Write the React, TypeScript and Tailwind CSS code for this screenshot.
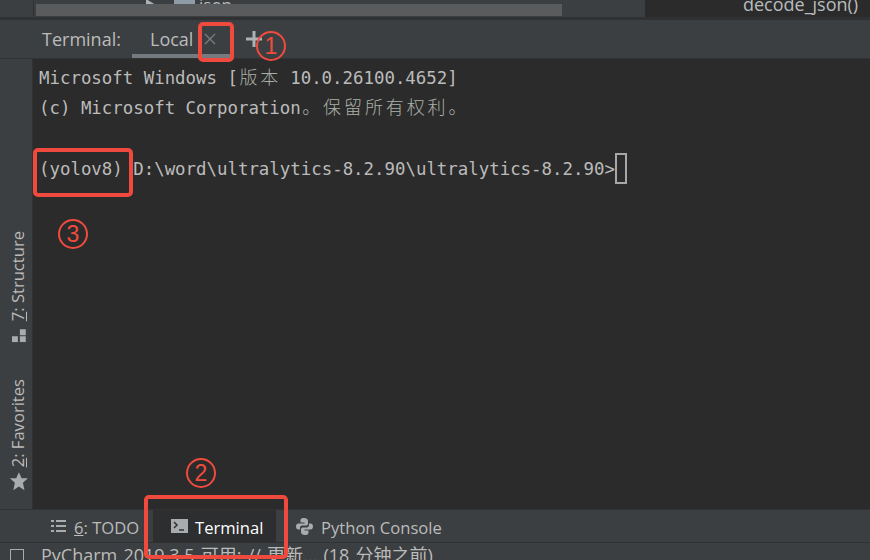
const mono = "font-['DejaVu_Sans_Mono','Noto_Sans_CJK_SC',monospace]";

function Circled({ n, cls }: { n: string; cls: string }) {
  return (
    <div className={`absolute flex items-center justify-center rounded-full border-2 border-[#f04b3e] text-[#f04b3e] font-['Liberation_Sans',sans-serif] text-[23px] w-[30px] h-[30px] ${cls}`}>
      {n}
    </div>
  );
}

function RedBox({ cls }: { cls: string }) {
  return <div className={`absolute border-4 border-[#f0493d] rounded-[5px] ${cls}`} />;
}

function Cjk({ text }: { text: string }) {
  return (
    <>
      {text.split("").map((c, i) => (
        <span key={i} className="inline-block w-[20.9px] text-center text-[18px] font-light text-[#aab0a8]">
          {c}
        </span>
      ))}
    </>
  );
}

export default function App() {
  return (
    <div className="relative w-[870px] h-[560px] overflow-hidden bg-[#3c3f41] flex flex-col font-['Open_Sans','Noto_Sans_CJK_SC',sans-serif] text-[#bbbbbb]">
      <div className="h-[17px] flex shrink-0 overflow-hidden">
        <div className="w-[33px] shrink-0" />
        <div className="w-[612px] shrink-0 relative border-l border-[#323232]">
          <div className="absolute left-[112px] -top-[8px] flex items-center gap-1 text-[17px]">
            <svg width="10" height="12" viewBox="0 0 10 12" className="mr-[14px]">
              <path d="M0 0L10 6L0 12Z" fill="#aeb1b3" />
            </svg>
            <div className="w-[21px] h-[14px] bg-[#8f9ba7] mt-[-8px]" />
            <span>json</span>
          </div>
          <div className="absolute left-[2px] top-[4px] w-[526px] h-[12px] bg-[#595b5d]" />
        </div>
        <div className="flex-1 bg-[#2b2b2b] pl-[98px] text-[18px] leading-[20px] -mt-[6px] h-[23px] text-[#b8bcbf]">decode_json()</div>
      </div>
      <div className="h-[3px] bg-[#2f3132] shrink-0" />
      <div className="h-[39px] shrink-0 flex pl-[42px] items-center border-b border-[#323232] text-[18px]">
        <span className="w-[90px]">Terminal:</span>
        <div className="relative flex items-center h-full w-[100px] pl-[18px]">
          <span>Local</span>
          <svg width="12" height="12" viewBox="0 0 12 12" className="ml-[11px]" stroke="#7b7e81" strokeWidth="1.3">
            <path d="M1 1L11 11M11 1L1 11" />
          </svg>
          <div className="absolute left-0 bottom-0 w-[98px] h-[4px] bg-[#747a80]" />
        </div>
        <svg width="16" height="16" viewBox="0 0 16 16" className="ml-[14px]" fill="#aeb1b3">
          <path d="M6.5 0h3v6.5H16v3H9.5V16h-3V9.5H0v-3h6.5z" />
        </svg>
      </div>
      <div className="flex flex-1 min-h-0">
        <div className="w-[33px] shrink-0 border-r border-[#323232] flex flex-col justify-end items-center pb-[19px] pl-[4px] text-[16.6px]">
          <div className="flex items-center [writing-mode:vertical-rl] rotate-180 gap-[7px] mb-[36px]">
            <svg width="14" height="14" viewBox="0 0 14 14" fill="#a9acae" className="rotate-180">
              <path d="M0 8h6v6H0zM8 8h6v6H8zM8 1h6v6H8z" />
            </svg>
            <span><span className="underline">7</span>: Structure</span>
          </div>
          <div className="flex items-center [writing-mode:vertical-rl] rotate-180 gap-[5px]">
            <svg width="18" height="18" viewBox="0 0 18 18" fill="#a9acae" className="rotate-180">
              <path d="M9 0l2.7 6H18l-5 4.3L14.6 18 9 14.2 3.4 18 5 10.3 0 6h6.3z" />
            </svg>
            <span><span className="underline">2</span>: Favorites</span>
          </div>
        </div>
        <div className={`flex-1 bg-[#2b2b2b] pl-[6px] pt-[4px] text-[17.4px] leading-[30px] text-[#bbbbbb] whitespace-pre ${mono}`}>
          <div className="h-[30px]">Microsoft Windows [<Cjk text="版本" /> 10.0.26100.4652]</div>
          <div className="h-[30px]">(c) Microsoft Corporation<Cjk text="。保留所有权利。" /></div>
          <div className="h-[30px]">&nbsp;</div>
          <div className="flex items-center">
            <span>(yolov8) D:\word\ultralytics-8.2.90\ultralytics-8.2.90&gt;</span>
            <span className="inline-block w-[12px] h-[31px] border-2 border-[#a5a7a9]" />
          </div>
        </div>
      </div>
      <div className="h-[33px] shrink-0 border-t border-[#323232] flex items-center pl-[51px] text-[16.6px]">
        <svg width="15" height="14" viewBox="0 0 15 14" fill="#a9acae">
          <path d="M0 1h3v2H0zM5 1h10v2H5zM0 6h3v2H0zM5 6h10v2H5zM0 11h3v2H0zM5 11h10v2H5z" />
        </svg>
        <span className="ml-[8px] w-[79px] mt-[4px]"><span className="underline">6</span>: TODO</span>
        <div className="w-[123px] h-full flex items-center bg-[#2c2e2f] pl-[18px] text-white">
          <svg width="17" height="14" viewBox="0 0 17 14">
            <rect width="17" height="14" fill="#a9acae" />
            <path d="M3 3l3 3-3 3" stroke="#333" strokeWidth="1.5" fill="none" />
            <path d="M8 11h5" stroke="#333" strokeWidth="1.5" />
          </svg>
          <span className="ml-[7px] mt-[4px]">Terminal</span>
        </div>
        <svg width="17" height="17" viewBox="0 0 17 17" fill="#a9acae" className="ml-[20px]">
          <path d="M8 0C5 0 4.5 1.2 4.5 3v1.500h4V5.500H2.500C1 5.500 0 6.700 0 8.500S1 11.500 2.500 11.500H4V9.700C4 8.500 5 7.500 6.200 7.500h4C11.400 7.500 12 6.700 12 5.700V3C12 1 10.500 0 8 0z" />
          <path d="M9 17c3 0 3.500-1.200 3.500-3v-1.500h-4v-1h6c1.500 0 2.500-1.200 2.500-3s-1-3-2.500-3H13v1.800c0 1.200-1 2.200-2.200 2.200h-4C5.600 9.500 5 10.300 5 11.300V14c0 2 1.500 3 4 3z" />
        </svg>
        <span className="ml-[8px] mt-[4px]">Python Console</span>
      </div>
      <div className="h-[18px] shrink-0 border-t border-[#323232] flex items-start pl-[10px] text-[18px] leading-[24px] overflow-hidden">
        <span className="w-[14px] h-[14px] mt-[6px] border border-[#a9acae] shrink-0" />
        <span className="ml-[17px] whitespace-nowrap [word-spacing:1.5px]">PyCharm 2019.3.5 可用: // 更新... (18 分钟之前)</span>
      </div>

      <RedBox cls="left-[198px] top-[22px] w-[36px] h-[40px]" />
      <RedBox cls="left-[33px] top-[148px] w-[100px] h-[49px]" />
      <RedBox cls="left-[144px] top-[495px] w-[144px] h-[64px]" />
      <Circled n="1" cls="left-[256px] top-[31px]" />
      <Circled n="2" cls="left-[186px] top-[458px]" />
      <Circled n="3" cls="left-[58px] top-[219px]" />
    </div>
  );
}
